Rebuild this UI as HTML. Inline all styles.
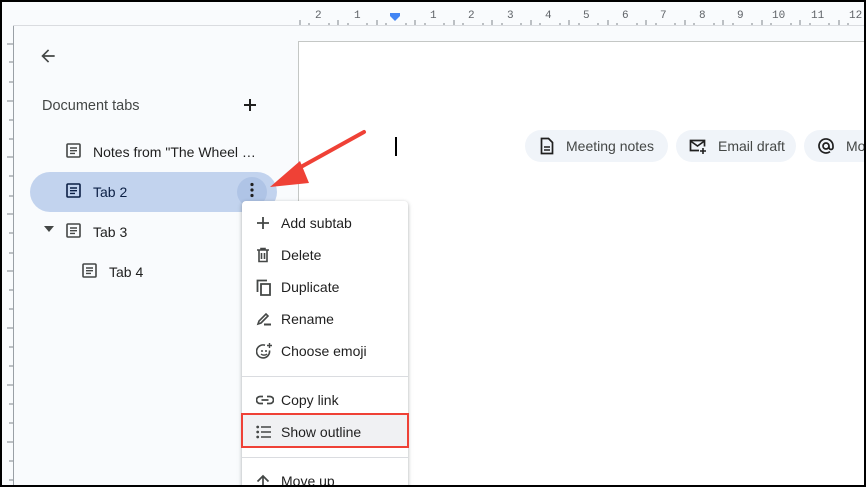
<!DOCTYPE html>
<html><head><style>
*{margin:0;padding:0;box-sizing:border-box}
body{width:866px;height:487px;overflow:hidden;background:#000;font-family:"Liberation Sans",Arial,sans-serif;position:relative}
.app{position:absolute;left:2px;top:2px;width:862px;height:483px;background:#f9fbfd;overflow:hidden}
.abs{position:absolute}
.t{position:absolute;font-size:14px;color:#1f1f1f;white-space:nowrap}
.chip{position:absolute;top:128px;height:32px;border-radius:16px;background:#f0f4f9;font-size:14px;color:#444746;display:flex;align-items:center}
.mi{position:absolute;left:242px;width:166px;height:32px;display:flex;align-items:center;font-size:14px;color:#1f1f1f}
.mi svg{position:absolute;left:14px}
.mi span{position:absolute;left:39px}
</style></head><body>
<div class="app">
 <svg class="abs" style="left:0;top:0" width="862" height="24">
  <g font-family="Liberation Mono,monospace" font-size="11" fill="#5f6368">
   <text x="313" y="16">2</text><text x="352" y="16">1</text><text x="428" y="16">1</text>
   <text x="466" y="16">2</text><text x="505" y="16">3</text><text x="543" y="16">4</text>
   <text x="581" y="16">5</text><text x="620" y="16">6</text><text x="658" y="16">7</text>
   <text x="697" y="16">8</text><text x="735" y="16">9</text><text x="770" y="16">10</text>
   <text x="809" y="16">11</text><text x="847" y="16">12</text>
  </g>
  <g stroke="#80868b">
   <path d="M298 18v6M307 21v3M327 21v3M336 18v6M346 21v3M365 21v3M375 18v6M384 21v3M404 21v3M413 18v6M423 21v3M442 21v3M452 18v6M461 21v3M481 21v3M490 18v6M500 21v3M519 21v3M529 18v6M538 21v3M558 21v3M567 18v6M577 21v3M596 21v3M606 18v6M615 21v3M635 21v3M644 18v6M654 21v3M673 21v3M683 18v6M692 21v3M712 21v3M721 18v6M731 21v3M750 21v3M760 18v6M769 21v3M789 21v3M798 18v6M808 21v3M827 21v3M837 18v6M846 21v3"/>
  </g>
  <path d="M388 11h10v3l-5 5-5-5z" fill="#4285f4"/>
 </svg>
 <div class="abs" style="left:11px;top:23px;width:851px;height:1px;background:#dadce0"></div>
 <div class="abs" style="left:11px;top:24px;width:1px;height:460px;background:#9aa0a6"></div>
 <svg class="abs" style="left:0;top:24px" width="12" height="460">
  <g stroke="#80868b"><path d="M5 18h6M7 36h4M7 56h4M5 75h6M7 94h4M7 113h4M5 131h6M7 150h4M7 170h4M5 188h6M7 207h4M7 227h4M5 245h6M7 264h4M7 283h4M5 302h6M7 321h4M7 340h4M5 359h6M7 378h4M7 397h4M5 416h6M7 435h4M7 454h4"/></g>
 </svg>
 <div class="abs" style="left:296px;top:39px;width:570px;height:460px;background:#fff;border-left:1px solid #c4c7c5;border-top:1px solid #c4c7c5"></div>
 <div class="abs" style="left:393px;top:135px;width:2px;height:19px;background:#000"></div>
 <svg class="abs" style="left:36px;top:44px" width="20" height="20" viewBox="0 0 24 24"><path d="M20 11H7.8l5.6-5.6L12 4l-8 8 8 8 1.4-1.4L7.8 13H20z" fill="#444746"/></svg>
 <div class="t" style="left:40px;top:96px;color:#444746;font-size:14.5px">Document tabs</div>
 <svg class="abs" style="left:241px;top:96px" width="14" height="14"><path d="M7 1v12M1 7h12" stroke="#1f1f1f" stroke-width="2"/></svg>
 <div class="abs" style="left:28px;top:170px;width:247px;height:40px;border-radius:20px;background:#c2d3ee"></div>
 <div class="abs" style="left:235px;top:175px;width:30px;height:30px;border-radius:15px;background:#afc4e6"></div>
 <svg class="abs" style="left:247px;top:180px" width="6" height="16"><circle cx="3" cy="2.5" r="1.6" fill="#1f1f1f"/><circle cx="3" cy="8" r="1.6" fill="#1f1f1f"/><circle cx="3" cy="13.5" r="1.6" fill="#1f1f1f"/></svg>
 <svg class="abs" style="left:64px;top:141px" width="16" height="16"><rect x="1" y="1" width="13" height="13" rx="1" fill="none" stroke="#444746" stroke-width="1.6"/><path d="M4 5h7M4 7.7h7M4 10.4h5" stroke="#444746" stroke-width="1.4"/></svg>
 <div class="t" style="left:91px;top:142px">Notes from "The Wheel …</div>
 <svg class="abs" style="left:64px;top:181px" width="16" height="16"><rect x="1" y="1" width="13" height="13" rx="1" fill="none" stroke="#0b1f44" stroke-width="1.6"/><path d="M4 5h7M4 7.7h7M4 10.4h5" stroke="#0b1f44" stroke-width="1.4"/></svg>
 <div class="t" style="left:91px;top:182px;color:#0b1f44">Tab 2</div>
 <svg class="abs" style="left:42px;top:224px" width="10" height="6"><path d="M0 0h10L5 6z" fill="#444746"/></svg>
 <svg class="abs" style="left:64px;top:221px" width="16" height="16"><rect x="1" y="1" width="13" height="13" rx="1" fill="none" stroke="#444746" stroke-width="1.6"/><path d="M4 5h7M4 7.7h7M4 10.4h5" stroke="#444746" stroke-width="1.4"/></svg>
 <div class="t" style="left:91px;top:222px">Tab 3</div>
 <svg class="abs" style="left:80px;top:261px" width="16" height="16"><rect x="1" y="1" width="13" height="13" rx="1" fill="none" stroke="#444746" stroke-width="1.6"/><path d="M4 5h7M4 7.7h7M4 10.4h5" stroke="#444746" stroke-width="1.4"/></svg>
 <div class="t" style="left:107px;top:262px">Tab 4</div>
 <div class="chip" style="left:523px;width:143px"><svg style="margin-left:15px" width="14" height="18"><path d="M1.5 1.5h7l4 4v11h-11z" fill="none" stroke="#1f1f1f" stroke-width="1.7"/><path d="M4 10h6M4 13h6" stroke="#1f1f1f" stroke-width="1.4"/></svg><span style="margin-left:12px">Meeting notes</span></div>
 <div class="chip" style="left:674px;width:120px"><svg style="margin-left:13px" width="18" height="16"><path d="M10 12.5H1.5V2.5h14v6" fill="none" stroke="#1f1f1f" stroke-width="1.7"/><path d="M1.5 3l7 5 7-5" fill="none" stroke="#1f1f1f" stroke-width="1.6"/><path d="M14 10v6M11 13h6" stroke="#1f1f1f" stroke-width="1.6"/></svg><span style="margin-left:11px">Email draft</span></div>
 <div class="chip" style="left:802px;width:100px"><svg style="margin-left:13px" width="18" height="18"><path d="M12 9a3 3 0 1 1-6 0 3 3 0 1 1 6 0v1.5a2 2 0 0 0 4 0V9a7 7 0 1 0-3 5.7" fill="none" stroke="#1f1f1f" stroke-width="1.7"/></svg><span style="margin-left:11px">Mo</span></div>
 <svg class="abs" style="left:260px;top:123px" width="110" height="65"><path d="M102 7L28 48" stroke="#ef4136" stroke-width="4" stroke-linecap="round"/><path d="M8 62L38 36L47 58z" fill="#ef4136"/></svg>
 <div class="abs" style="left:240px;top:199px;width:166px;height:300px;background:#fff;border-radius:4px;box-shadow:0 1px 3px rgba(60,64,67,.3),0 2px 6px rgba(60,64,67,.15)"></div>
 <div class="abs" style="left:240px;top:374px;width:166px;height:1px;background:#dadce0"></div>
 <div class="abs" style="left:240px;top:455px;width:166px;height:1px;background:#dadce0"></div>
 <div class="abs" style="left:239px;top:411px;width:168px;height:35px;background:#f0f1f3;border:2px solid #ef4136"></div>
 <div class="mi" style="top:205px;left:240px"><svg width="14" height="14"><path d="M7 1v12M1 7h12" stroke="#444746" stroke-width="1.8"/></svg><span>Add subtab</span></div>
 <div class="mi" style="top:237px;left:240px"><svg width="14" height="16"><path d="M1 3h12M5 3V1.5h4V3M3 3.5v11h8v-11M5.5 6v6M8.5 6v6" fill="none" stroke="#444746" stroke-width="1.6"/></svg><span>Delete</span></div>
 <div class="mi" style="top:269px;left:240px"><svg width="16" height="17"><path d="M1.5 13V1.5H11" fill="none" stroke="#444746" stroke-width="1.8"/><path d="M5 5h9v11H5z" fill="none" stroke="#444746" stroke-width="1.8"/></svg><span>Duplicate</span></div>
 <div class="mi" style="top:301px;left:240px"><svg width="16" height="14"><path d="M2 12l1-3 7-7 2 2-7 7z" fill="none" stroke="#444746" stroke-width="1.6"/><path d="M8 12.5h7" stroke="#444746" stroke-width="2"/></svg><span>Rename</span></div>
 <div class="mi" style="top:333px;left:240px"><svg width="17" height="17"><path d="M13.5 7.5A6.5 6.5 0 1 1 9 2.2" fill="none" stroke="#444746" stroke-width="1.6"/><circle cx="6" cy="8" r="1" fill="#444746"/><circle cx="10" cy="8" r="1" fill="#444746"/><path d="M5 11c1.5 1.5 4.5 1.5 6 0" fill="none" stroke="#444746" stroke-width="1.4"/><path d="M13.5 0v5M11 2.5h5" stroke="#444746" stroke-width="1.4"/></svg><span>Choose emoji</span></div>
 <div class="mi" style="top:382px;left:240px"><svg width="18" height="10"><path d="M7 1.5H4a3.5 3.5 0 0 0 0 7h3M11 1.5h3a3.5 3.5 0 0 1 0 7h-3M5.5 5h7" fill="none" stroke="#444746" stroke-width="1.7"/></svg><span>Copy link</span></div>
 <div class="mi" style="top:414px;left:240px"><svg width="16" height="14"><g fill="#444746"><circle cx="1.7" cy="2" r="1.4"/><circle cx="1.7" cy="7" r="1.4"/><circle cx="1.7" cy="12" r="1.4"/></g><path d="M5 2h10M5 7h10M5 12h10" stroke="#444746" stroke-width="1.6"/></svg><span>Show outline</span></div>
 <div class="mi" style="top:463px;left:240px"><svg width="14" height="14"><path d="M7 14V2M1.5 7.5L7 2l5.5 5.5" fill="none" stroke="#444746" stroke-width="1.7"/></svg><span>Move up</span></div>
</div>
</body></html>
